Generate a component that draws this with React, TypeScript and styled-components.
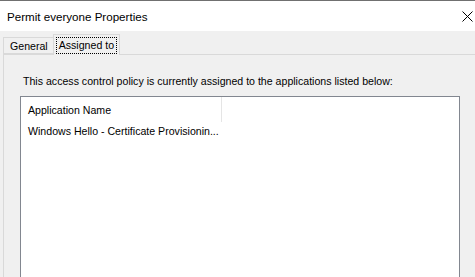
import { FC } from "react";
import styled, { createGlobalStyle } from "styled-components";

const GlobalStyle = createGlobalStyle`
  html, body {
    margin: 0;
    padding: 0;
    overflow: hidden;
    background: #f0f0f0;
  }
  body {
    font-family: "Liberation Sans", Arial, sans-serif;
    color: #000;
  }
`;

const Window = styled.div`
  width: 475px;
  height: 277px;
  overflow: hidden;
  border-top: 1px solid #707070;
  box-sizing: border-box;
  background: #f0f0f0;
  display: flex;
  flex-direction: column;
`;

const TitleBar = styled.header`
  flex: none;
  height: 30px;
  background: #fff;
  display: flex;
  align-items: center;
  justify-content: space-between;
  padding-left: 7px;
  box-sizing: border-box;
`;

const Title = styled.span`
  font-size: 11.6px;
`;

const CloseButton = styled.button`
  width: 16px;
  height: 30px;
  padding: 0;
  border: none;
  background: transparent;
  display: flex;
  align-items: center;
  justify-content: center;
`;

const TabStrip = styled.div`
  flex: none;
  display: flex;
  align-items: flex-end;
  height: 23px;
  padding-left: 3px;
  position: relative;
  z-index: 1;
`;

const Tab = styled.div<{ $active?: boolean }>`
  box-sizing: border-box;
  height: ${(p) => (p.$active ? "21px" : "17px")};
  margin-bottom: ${(p) => (p.$active ? "-1px" : "0")};
  margin-left: ${(p) => (p.$active ? "-2px" : "0")};
  padding: ${(p) => (p.$active ? "2px 2px 0" : "0 6px")};
  border: 1px solid #d9d9d9;
  border-bottom: ${(p) => (p.$active ? "none" : "1px solid #d9d9d9")};
  background: #f0f0f0;
  font-size: 10.6px;
  display: flex;
  align-items: ${(p) => (p.$active ? "flex-start" : "center")};
  position: relative;
  z-index: ${(p) => (p.$active ? 2 : 1)};
`;

const FocusRect = styled.span`
  border: 1px dotted #000;
  padding: 1px 2px;
  line-height: 13px;
`;

const Panel = styled.section`
  flex: 1;
  min-height: 0;
  margin-left: 3px;
  margin-right: -40px;
  border-top: 1px solid #d9d9d9;
  border-left: 1px solid #d9d9d9;
  padding: 20px 0 0 16px;
`;

const Intro = styled.p`
  margin: 0 0 0 3px;
  font-size: 10.6px;
  line-height: 13px;
`;

const ListBox = styled.div`
  margin-top: 8px;
  width: 440px;
  height: 200px;
  box-sizing: border-box;
  border: 1px solid #828790;
  background: #fff;
`;

const HeaderRow = styled.div`
  display: flex;
  height: 25px;
`;

const HeaderCell = styled.div<{ $width: number }>`
  width: ${(p) => p.$width}px;
  box-sizing: border-box;
  padding-left: 7px;
  border-right: 1px solid #e5e5e5;
  font-size: 10.6px;
  display: flex;
  align-items: center;
`;

const ItemRow = styled.div`
  height: 17px;
  padding-left: 7px;
  font-size: 10.6px;
  display: flex;
  align-items: center;
`;

const CloseIcon: FC = () => (
  <svg width="11" height="11" viewBox="0 0 11 11">
    <path d="M0.5 0.5 L10.5 10.5 M10.5 0.5 L0.5 10.5" stroke="#000" strokeWidth="1" />
  </svg>
);

export default function App() {
  return (
    <>
      <GlobalStyle />
      <Window>
        <TitleBar>
          <Title>Permit everyone Properties</Title>
          <CloseButton aria-label="Close">
            <CloseIcon />
          </CloseButton>
        </TitleBar>
        <TabStrip>
          <Tab>General</Tab>
          <Tab $active>
            <FocusRect>Assigned to</FocusRect>
          </Tab>
        </TabStrip>
        <Panel>
          <Intro>This access control policy is currently assigned to the applications listed below:</Intro>
          <ListBox>
            <HeaderRow>
              <HeaderCell $width={201}>Application Name</HeaderCell>
            </HeaderRow>
            <ItemRow>Windows Hello - Certificate Provisionin...</ItemRow>
          </ListBox>
        </Panel>
      </Window>
    </>
  );
}
